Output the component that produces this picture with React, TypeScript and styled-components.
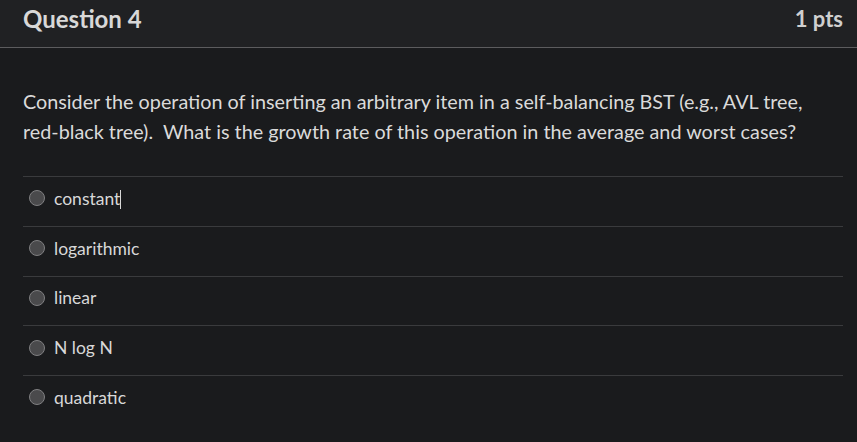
import React from 'react';
import styled, { createGlobalStyle } from 'styled-components';

const GlobalStyle = createGlobalStyle`
  html, body {
    margin: 0;
    padding: 0;
    background: #1a1b1d;
  }
  body {
    font-family: Lato, "Open Sans", sans-serif;
    color: #d7d7d7;
  }
`

const Card = styled.div`
  width: 857px;
  height: 442px;
  background: #1a1b1d;
  display: flex;
  flex-direction: column;
`

const Header = styled.div`
  height: 48px;
  box-sizing: border-box;
  display: flex;
  align-items: center;
  justify-content: space-between;
  padding: 0 14px 10px 23px;
  background: #202123;
  border-bottom: 1.5px solid #5c5c5e;
`

const Title = styled.h2`
  margin: 0;
  font-size: 24px;
  line-height: 28px;
  font-weight: 700;
  color: #d8d8d8;
`

const Points = styled.span`
  font-size: 22px;
  line-height: 28px;
  font-weight: 700;
  color: #cfcfcf;
`

const Body = styled.div`
  padding: 38px 14px 0 23px;
`

const QuestionText = styled.p`
  margin: 0 0 30px;
  font-size: 19.8px;
  line-height: 30px;
  color: #dadada;
`

const Answers = styled.div`
  display: flex;
  flex-direction: column;
`

const Answer = styled.label`
  height: 49.75px;
  box-sizing: border-box;
  display: flex;
  align-items: center;
  gap: 9px;
  padding: 0 0 6px 6px;
  border-top: 1px solid #3a3b3d;
  font-size: 17.5px;
  color: #d8d8d8;
`

const Radio = styled.span`
  width: 14px;
  height: 14px;
  border-radius: 50%;
  background: #4a4a4c;
  border: 1px solid #808082;
`

const Caret = styled.span`
  display: inline-block;
  width: 1px;
  height: 19px;
  background: #d8d8d8;
  vertical-align: -4px;
`

const options = ['constant', 'logarithmic', 'linear', 'N log N', 'quadratic'];

const App = () => {
  return (
    <>
      <GlobalStyle />
      <Card>
        <Header>
          <Title>Question 4</Title>
          <Points>1 pts</Points>
        </Header>
        <Body>
          <QuestionText>
            Consider the operation of inserting an arbitrary item in a self-balancing BST (e.g., AVL tree,
            red-black tree).&nbsp; What is the growth rate of this operation in the average and worst cases?
          </QuestionText>
          <Answers>
            {options.map((opt, i) => (
              <Answer key={opt}>
                <Radio />
                <span>
                  {opt}
                  {i === 0 && <Caret />}
                </span>
              </Answer>
            ))}
          </Answers>
        </Body>
      </Card>
    </>
  )
}

export default App;
